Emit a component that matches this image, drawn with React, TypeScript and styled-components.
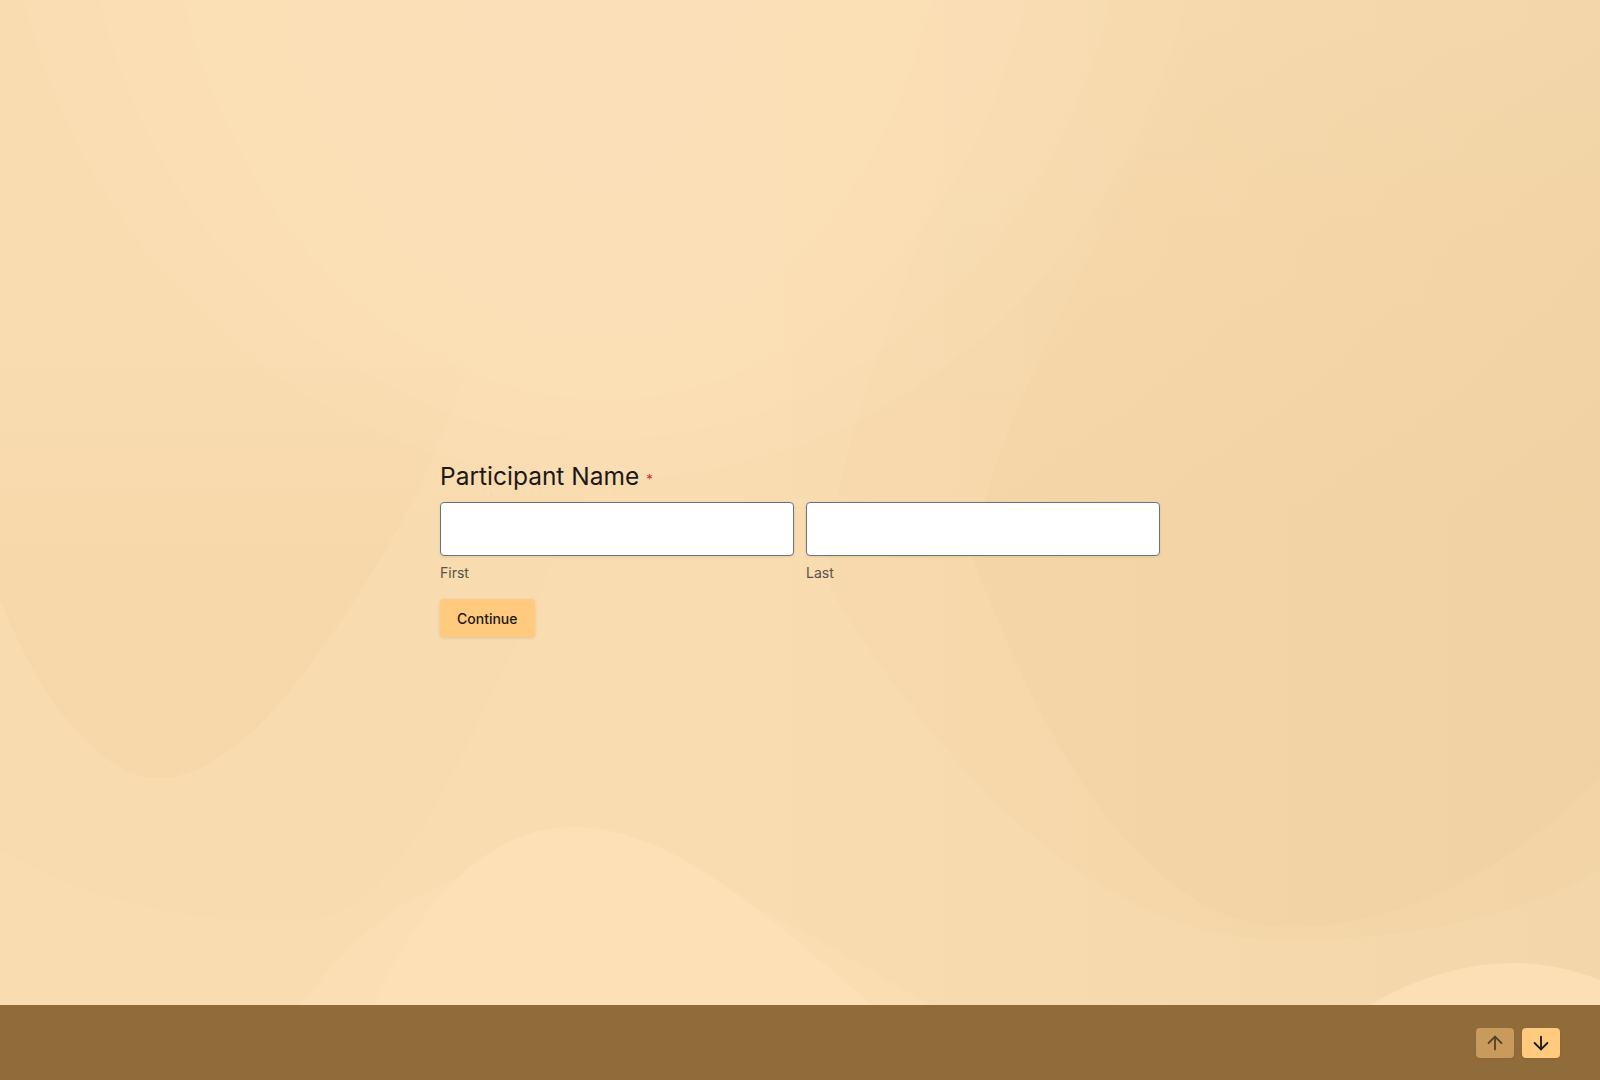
import React from 'react';
import styled, { createGlobalStyle } from 'styled-components';
import { ArrowUp, ArrowDown } from 'lucide-react';

const GlobalStyle = createGlobalStyle`
  html, body {
    margin: 0;
    padding: 0;
  }
  body {
    font-family: Inter, "Noto Sans", "Liberation Sans", sans-serif;
    color: #1c1917;
  }
  * {
    box-sizing: border-box;
  }
`;

const Page = styled.div`
  min-height: 100vh;
  display: flex;
  flex-direction: column;
`;

const Main = styled.main`
  flex: 1;
  position: relative;
  overflow: hidden;
  background: #f9dcb0;
  display: flex;
  justify-content: center;
  align-items: center;
  padding-top: 92px;
`;

const Backdrop = styled.svg`
  position: absolute;
  inset: 0;
  width: 100%;
  height: 100%;
  z-index: 0;
`;

const Form = styled.form`
  position: relative;
  z-index: 1;
  width: 720px;
  display: flex;
  flex-direction: column;
`;

const Question = styled.label`
  font-size: 24.5px;
  line-height: 32px;
  font-weight: 400;
  color: #1c1917;
  display: flex;
  align-items: center;
  gap: 7px;
  margin-bottom: 10px;
`;

const Required = styled.span`
  color: #dc2626;
  font-size: 13px;
  line-height: 1;
  margin-top: 6px;
`;

const FieldRow = styled.div`
  display: grid;
  grid-template-columns: 1fr 1fr;
  gap: 12px;
`;

const Field = styled.div`
  display: flex;
  flex-direction: column;
`;

const TextInput = styled.input`
  height: 54px;
  width: 100%;
  border: 1px solid #6b7280;
  border-radius: 4px;
  background: #ffffff;
  box-shadow: 0 1px 3px rgba(120, 80, 20, 0.12);
  font-family: inherit;
  font-size: 16px;
  padding: 0 14px;
  outline: none;
`;

const SubLabel = styled.span`
  margin-top: 7px;
  font-size: 14px;
  line-height: 20px;
  color: #57534e;
`;

const ContinueButton = styled.button`
  margin-top: 16px;
  align-self: flex-start;
  height: 38px;
  padding: 0 17px;
  border: none;
  border-radius: 4px;
  background: #ffc97e;
  color: #1c1917;
  font-family: inherit;
  font-size: 14px;
  font-weight: 500;
  box-shadow: 0 1px 3px rgba(120, 80, 20, 0.18);
  cursor: pointer;
`;

const Footer = styled.footer`
  height: 75px;
  background: #916c3b;
  display: flex;
  justify-content: flex-end;
  align-items: center;
  gap: 8px;
  padding-right: 40px;
`;

const NavButton = styled.button<{ $disabled?: boolean }>`
  width: 38px;
  height: 30px;
  border: none;
  border-radius: 4px;
  background: #ffc97e;
  color: #1c1917;
  display: flex;
  align-items: center;
  justify-content: center;
  padding: 0;
  opacity: ${({ $disabled }) => ($disabled ? 0.5 : 1)};
  box-shadow: 0 1px 2px rgba(60, 40, 10, 0.15);
  cursor: ${({ $disabled }) => ($disabled ? 'default' : 'pointer')};
`;

// concentric glow rings at the top centre
const rings = [
  { rx: 600, ry: 640 },
  { rx: 525, ry: 600 },
  { rx: 440, ry: 560 },
  { rx: 345, ry: 500 },
  { rx: 210, ry: 412 },
  { rx: 160, ry: 353 },
  { rx: 112, ry: 280 },
];

const Background: React.FC = () => (
  <Backdrop viewBox="0 0 1600 1005" preserveAspectRatio="none" aria-hidden="true">
    <defs>
      <linearGradient id="base" x1="0" y1="0" x2="1" y2="0">
        <stop offset="0" stopColor="#f9dcb0" />
        <stop offset="0.45" stopColor="#f9dcb0" />
        <stop offset="1" stopColor="#f3d6a9" />
      </linearGradient>
      <linearGradient id="shade" x1="0" y1="0" x2="0" y2="1">
        <stop offset="0" stopColor="#c08a45" stopOpacity="0" />
        <stop offset="0.55" stopColor="#c08a45" stopOpacity="1" />
        <stop offset="1" stopColor="#c08a45" stopOpacity="1" />
      </linearGradient>
    </defs>
    <rect x="0" y="0" width="1600" height="1005" fill="url(#base)" />
    {/* right halo + blob */}
    <path
      d="M1000,0 C930,250 820,450 830,590 C950,780 1100,940 1285,940 C1450,940 1550,900 1600,870 L1600,0 Z"
      fill="url(#shade)"
      opacity="0.025"
    />
    <path
      d="M1212,0 C1100,250 990,420 973,560 C1050,760 1150,927 1290,927 C1420,927 1530,850 1600,777 L1600,0 Z"
      fill="url(#shade)"
      opacity="0.035"
    />
    {/* left halo + blob */}
    <path
      d="M0,380 L0,850 C80,900 200,925 300,922 C380,918 430,820 470,740 C540,600 590,480 630,380 Z"
      fill="url(#shade)"
      opacity="0.014"
    />
    <path
      d="M0,330 L0,600 C40,700 100,778 158,778 C230,778 300,690 380,560 C420,495 450,420 480,330 Z"
      fill="url(#shade)"
      opacity="0.04"
    />
    {rings.map((r) => (
      <ellipse key={r.rx} cx="605" cy="-160" rx={r.rx} ry={r.ry} fill="#ffe6bc" opacity="0.18" />
    ))}
    {/* bottom light hills */}
    <path d="M300,1005 C380,900 460,860 574,858 C700,860 800,930 930,1005 Z" fill="#ffe3b8" opacity="0.3" />
    <path d="M373,1005 C430,880 500,827 574,827 C680,827 780,930 873,1005 Z" fill="#fde0b5" />
    <path d="M1370,1005 C1420,975 1470,963 1514,963 C1550,963 1580,972 1600,980 L1600,1005 Z" fill="#fcdfb4" />
  </Backdrop>
);

const App: React.FC = () => {
  return (
    <>
      <GlobalStyle />
      <Page>
        <Main>
          <Background />
          <Form onSubmit={(e) => e.preventDefault()}>
            <Question htmlFor="first-name">
              Participant Name
              <Required>*</Required>
            </Question>
            <FieldRow>
              <Field>
                <TextInput id="first-name" type="text" />
                <SubLabel>First</SubLabel>
              </Field>
              <Field>
                <TextInput id="last-name" type="text" />
                <SubLabel>Last</SubLabel>
              </Field>
            </FieldRow>
            <ContinueButton type="submit">Continue</ContinueButton>
          </Form>
        </Main>
        <Footer>
          <NavButton $disabled aria-label="Previous">
            <ArrowUp size={22} strokeWidth={2} />
          </NavButton>
          <NavButton aria-label="Next">
            <ArrowDown size={22} strokeWidth={2} />
          </NavButton>
        </Footer>
      </Page>
    </>
  );
};

export default App;
